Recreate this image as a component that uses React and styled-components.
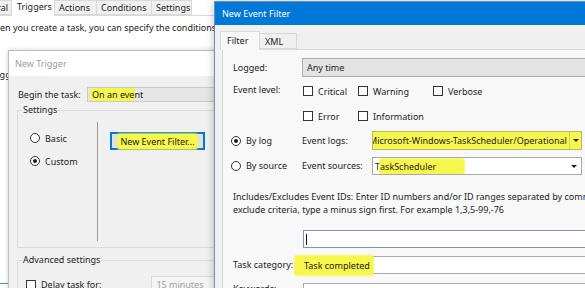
import React from 'react';
import styled, { createGlobalStyle } from 'styled-components';

const GlobalStyle = createGlobalStyle`
  html, body {
    margin: 0;
    padding: 0;
    background: #fff;
  }
  body {
    font-family: "Noto Sans", "Open Sans", sans-serif;
    font-size: 9px;
    color: #1c1c1c;
  }
  * {
    box-sizing: border-box;
  }
`;

const Desktop = styled.div`
  position: relative;
  width: 585px;
  height: 288px;
  overflow: hidden;
  background: #fff;
`;

/* task properties page behind the dialogs */
const TaskPage = styled.div`
  display: flex;
  flex-direction: column;
  height: 100%;
`;

const TabStrip = styled.div`
  display: flex;
  align-items: flex-end;
  height: 16px;
  margin-left: -30px;
  border-bottom: 1px solid #d9d9d9;
`;

const PageTab = styled.div`
  width: ${(p) => p.$w}px;
  height: ${(p) => (p.$active ? 17 : 15)}px;
  margin-bottom: ${(p) => (p.$active ? -1 : 0)}px;
  padding-left: ${(p) => (p.$active ? 5 : 4)}px;
  display: flex;
  align-items: center;
  background: ${(p) => (p.$active ? '#fff' : '#f0f0f0')};
  border: 1px solid #d9d9d9;
  border-bottom: ${(p) => (p.$active ? 'none' : '1px solid #d9d9d9')};
  border-left: ${(p) => (p.$first ? '1px solid #d9d9d9' : 'none')};
  line-height: 1;
  padding-bottom: ${(p) => (p.$active ? 3 : 1)}px;
`;

const Hint = styled.div`
  margin: 5px 0 0 -14px;
  line-height: 13px;
  white-space: nowrap;
`;

const TriggerList = styled.div`
  flex: 1;
  display: flex;
  flex-direction: column;
  margin: 20px 0 0 -11px;
`;

const ListHeader = styled.div`
  padding-top: 15px;
  line-height: 12px;
`;

const SelectedRow = styled.div`
  margin-top: auto;
  margin-bottom: 4px;
  height: 1px;
  background: #4a90d9;
`;

/* shared window chrome */
const TriggerWindow = styled.section`
  position: absolute;
  left: 8px;
  top: 50px;
  width: 300px;
  height: 250px;
  display: flex;
  flex-direction: column;
  background: #f0f0f0;
  border: 1px solid #bdbdbd;
  box-shadow: 0 0 5px rgba(0, 0, 0, 0.18);
`;

const InactiveTitle = styled.div`
  height: 25px;
  flex: none;
  display: flex;
  align-items: center;
  padding-left: 6px;
  background: #fff;
  color: #9b9b9b;
`;

const TriggerBody = styled.div`
  display: flex;
  flex-direction: column;
  padding: 11px 0 0 9px;
`;

const FieldRow = styled.div`
  display: flex;
  align-items: ${(p) => (p.$top ? 'flex-start' : 'center')};
  height: ${(p) => p.$h || 18}px;
  margin-top: ${(p) => p.$mt || 0}px;
`;

const Label = styled.div`
  width: ${(p) => p.$w}px;
  flex: none;
  white-space: nowrap;
  line-height: 12px;
`;

const Combo = styled.div`
  height: 100%;
  flex: ${(p) => (p.$w ? 'none' : 1)};
  width: ${(p) => (p.$w ? `${p.$w}px` : 'auto')};
  display: flex;
  align-items: center;
  padding-left: ${(p) => p.$pl ?? 4}px;
  background: ${(p) => p.$bg || '#e3e3e3'};
  border: 1px solid ${(p) => p.$border || '#adadad'};
  color: ${(p) => (p.$disabled ? '#a2a2a2' : 'inherit')};
  white-space: nowrap;
  overflow: hidden;
`;

const ComboText = styled.span`
  flex: 1;
  overflow: hidden;
  display: flex;
  align-items: center;
  height: 100%;
`;

const ArrowButton = styled.div`
  width: ${(p) => p.$w || 12}px;
  height: 100%;
  flex: none;
  display: grid;
  place-items: center;
  border-left: ${(p) => (p.$boxed ? '1px solid #d3d35a' : 'none')};
  &::after {
    content: '';
    border-left: 3px solid transparent;
    border-right: 3px solid transparent;
    border-top: 3px solid #222;
  }
`;

const Marker = styled.span`
  background: #f7f64c;
  box-shadow: 0 0 2px 1px rgba(247, 246, 76, 0.85);
  border-radius: 2px;
  padding: ${(p) => p.$pad || '0'};
  margin: ${(p) => p.$m || '0'};
`;

const Group = styled.fieldset`
  margin: ${(p) => p.$mt}px 0 0 -1px;
  padding: 0;
  border: 1px solid #dcdcdc;
  min-width: 0;
`;

const GroupLegend = styled.legend`
  margin-left: 4px;
  padding: 0 1px;
  line-height: 12px;
`;

const SettingsInner = styled.div`
  display: flex;
  height: 131px;
`;

const RadioColumn = styled.div`
  width: 79px;
  flex: none;
  display: flex;
  flex-direction: column;
  gap: 11px;
  padding: 16px 0 0 12px;
`;

const Divider = styled.div`
  width: 1px;
  margin: 6px 0;
  background: #9a9a9a;
`;

const ButtonColumn = styled.div`
  padding: 16px 0 0 12px;
`;

const FilterButton = styled.div`
  width: 95px;
  height: 18px;
  display: flex;
  align-items: center;
  justify-content: center;
  background: #e1e1e1;
  border: 1px solid #0078d7;
  box-shadow: inset 0 0 0 1px #0078d7;
`;

const AdvancedInner = styled.div`
  display: flex;
  align-items: center;
  height: 25px;
  padding: 12px 0 0 8px;
`;

const DelayCombo = styled(Combo)`
  height: 17px;
  margin-left: 50px;
`;

const Option = styled.label`
  display: flex;
  align-items: center;
  gap: ${(p) => p.$gap || 5}px;
  white-space: nowrap;
  height: ${(p) => p.$h || 12}px;
  margin-left: ${(p) => p.$ml || 0}px;
`;

const Box = styled.span`
  width: 10px;
  height: 10px;
  flex: none;
  background: #fff;
  border: 1px solid #333;
`;

const Round = styled.span`
  width: 10px;
  height: 10px;
  flex: none;
  display: grid;
  place-items: center;
  border-radius: 50%;
  background: #fff;
  border: 1px solid #333;
  &::after {
    content: '';
    width: 4px;
    height: 4px;
    border-radius: 50%;
    background: ${(p) => (p.$checked ? '#1c1c1c' : 'transparent')};
  }
`;

/* front dialog */
const FilterWindow = styled.section`
  position: absolute;
  left: 214px;
  top: 1px;
  width: 390px;
  height: 300px;
  display: flex;
  flex-direction: column;
  background: #f0f0f0;
  border: 1px solid #6f8fb5;
  box-shadow: 0 0 8px rgba(0, 0, 0, 0.25);
`;

const ActiveTitle = styled.div`
  height: 23px;
  flex: none;
  display: flex;
  align-items: center;
  padding-left: 7px;
  background: #0078d7;
  color: #fff;
`;

const FilterBody = styled.div`
  flex: 1;
  display: flex;
  flex-direction: column;
  padding: 6px 0 0 7px;
`;

const DialogTabs = styled.div`
  display: flex;
  align-items: flex-end;
  height: 18px;
  position: relative;
  z-index: 1;
`;

const DialogTab = styled.div`
  width: ${(p) => p.$w}px;
  height: ${(p) => (p.$active ? 19 : 16)}px;
  margin: ${(p) => (p.$active ? '0 0 -1px -2px' : '0 0 0 0')};
  padding: ${(p) => (p.$active ? '0 0 2px 6px' : '0 0 0 5px')};
  display: flex;
  align-items: center;
  background: ${(p) => (p.$active ? '#f8f8f8' : '#f0f0f0')};
  border: 1px solid #d9d9d9;
  border-bottom: ${(p) => (p.$active ? 'none' : '1px solid #d9d9d9')};
  border-left: ${(p) => (p.$active ? '1px solid #d9d9d9' : 'none')};
`;

const TabPanel = styled.div`
  flex: 1;
  display: flex;
  flex-direction: column;
  padding: 8px 0 0 10px;
  background: #f8f8f8;
  border-top: 1px solid #d9d9d9;
  border-left: 1px solid #d9d9d9;
`;

const LevelRow = styled.div`
  display: flex;
  margin-top: 6px;
`;

const LevelLabel = styled.div`
  width: 69px;
  flex: none;
  line-height: 14px;
`;

const LevelGrid = styled.div`
  display: grid;
  grid-template-columns: 55px 75px auto;
  row-gap: 9px;
  padding-left: 1px;
`;

const Description = styled.p`
  margin: 15px 0 0;
  line-height: 13px;
  white-space: nowrap;
`;

const TextBox = styled.div`
  height: 100%;
  flex: 1;
  display: flex;
  align-items: center;
  padding-left: ${(p) => p.$pl ?? 2}px;
  margin-left: ${(p) => p.$ml || 0}px;
  background: #fff;
  border: 1px solid ${(p) => (p.$focused ? '#7799bd' : '#a9a9a9')};
  white-space: nowrap;
`;

const Caret = styled.span`
  width: 1px;
  height: 11px;
  background: #111;
`;

function Chevron() {
  return (
    <svg width="8" height="5" viewBox="0 0 8 5">
      <polyline points="1,1 4,4 7,1" fill="none" stroke="#b5b5b5" strokeWidth="1" />
    </svg>
  );
}

function Check({ label, ...rest }) {
  return (
    <Option {...rest}>
      <Box />
      {label}
    </Option>
  );
}

function Radio({ label, checked, ...rest }) {
  return (
    <Option {...rest}>
      <Round $checked={checked} />
      {label}
    </Option>
  );
}

export default function App() {
  return (
    <>
      <GlobalStyle />
      <Desktop>
        <TaskPage>
          <TabStrip>
            <PageTab $w={42} $first>General</PageTab>
            <PageTab $w={43} $active>Triggers</PageTab>
            <PageTab $w={42}>Actions</PageTab>
            <PageTab $w={55}>Conditions</PageTab>
            <PageTab $w={40}>Settings</PageTab>
          </TabStrip>
          <Hint>When you create a task, you can specify the conditions that will trigger the task.</Hint>
          <TriggerList>
            <ListHeader>Trigger</ListHeader>
            <SelectedRow />
          </TriggerList>
        </TaskPage>

        <TriggerWindow>
          <InactiveTitle>New Trigger</InactiveTitle>
          <TriggerBody>
            <FieldRow $h={15}>
              <Label $w={69}>Begin the task:</Label>
              <Combo $bg="#e6e6e6" $border="#cacaca">
                <Marker $pad="1px 0 1px 1px" $m="0 0 0 -1px">On an eve</Marker>nt
              </Combo>
            </FieldRow>

            <Group $mt={2}>
              <GroupLegend>Settings</GroupLegend>
              <SettingsInner>
                <RadioColumn>
                  <Radio label="Basic" />
                  <Radio label="Custom" checked />
                </RadioColumn>
                <Divider />
                <ButtonColumn>
                  <FilterButton>
                    <Marker $pad="1px 2px">New Event Filter...</Marker>
                  </FilterButton>
                </ButtonColumn>
              </SettingsInner>
            </Group>

            <Group $mt={6}>
              <GroupLegend>Advanced settings</GroupLegend>
              <AdvancedInner>
                <Check label="Delay task for:" />
                <DelayCombo $w={84} $bg="#f4f4f4" $border="#dadada" $disabled>
                  <ComboText>15 minutes</ComboText>
                  <ArrowButton as="span" $w={12}>
                    <Chevron />
                  </ArrowButton>
                </DelayCombo>
              </AdvancedInner>
            </Group>
          </TriggerBody>
        </TriggerWindow>

        <FilterWindow>
          <ActiveTitle>New Event Filter</ActiveTitle>
          <FilterBody>
            <DialogTabs>
              <DialogTab $w={40} $active>Filter</DialogTab>
              <DialogTab $w={37}>XML</DialogTab>
            </DialogTabs>
            <TabPanel>
              <FieldRow $h={19}>
                <Label $w={69}>Logged:</Label>
                <Combo>Any time</Combo>
              </FieldRow>

              <LevelRow>
                <LevelLabel>Event level:</LevelLabel>
                <LevelGrid>
                  <Check label="Critical" $h={16} />
                  <Check label="Warning" $h={16} />
                  <Check label="Verbose" $h={16} />
                  <Check label="Error" $h={16} />
                  <Check label="Information" $h={16} />
                </LevelGrid>
              </LevelRow>

              <FieldRow $h={19} $mt={7}>
                <Label $w={69}>
                  <Radio label="By log" checked $ml={-2} />
                </Label>
                <Label $w={70}>Event logs:</Label>
                <Combo $w={210} $bg="#f7f64c" $border="#b8b86a" $pl={0}>
                  <ComboText>
                    <span style={{ marginLeft: -4 }}>Microsoft-Windows-TaskScheduler/Operational</span>
                  </ComboText>
                  <ArrowButton $boxed $w={12} />
                </Combo>
              </FieldRow>

              <FieldRow $h={18} $mt={7}>
                <Label $w={69}>
                  <Radio label="By source" $ml={-2} />
                </Label>
                <Label $w={70}>Event sources:</Label>
                <Combo $w={210} $bg="#fff" $border="#a9a9a9" $pl={2}>
                  <ComboText>
                    T<Marker $pad="1px 28px 1px 0">askScheduler</Marker>
                  </ComboText>
                  <ArrowButton $w={14} />
                </Combo>
              </FieldRow>

              <Description>
                Includes/Excludes Event IDs: Enter ID numbers and/or ID ranges separated by commas. To
                <br />
                exclude criteria, type a minus sign first. For example 1,3,5-99,-76
              </Description>

              <FieldRow $h={18} $mt={14}>
                <TextBox $ml={70} $focused>
                  <Caret />
                </TextBox>
              </FieldRow>

              <FieldRow $h={18} $mt={8}>
                <Label $w={70}>Task category:</Label>
                <TextBox $pl={0}>
                  <Marker $pad="3px 3px 3px 9px" $m="0 0 0 -9px">Task completed</Marker>
                </TextBox>
              </FieldRow>

              <FieldRow $h={18} $mt={9} $top>
                <Label $w={70}>Keywords:</Label>
                <TextBox />
              </FieldRow>
            </TabPanel>
          </FilterBody>
        </FilterWindow>
      </Desktop>
    </>
  );
}
